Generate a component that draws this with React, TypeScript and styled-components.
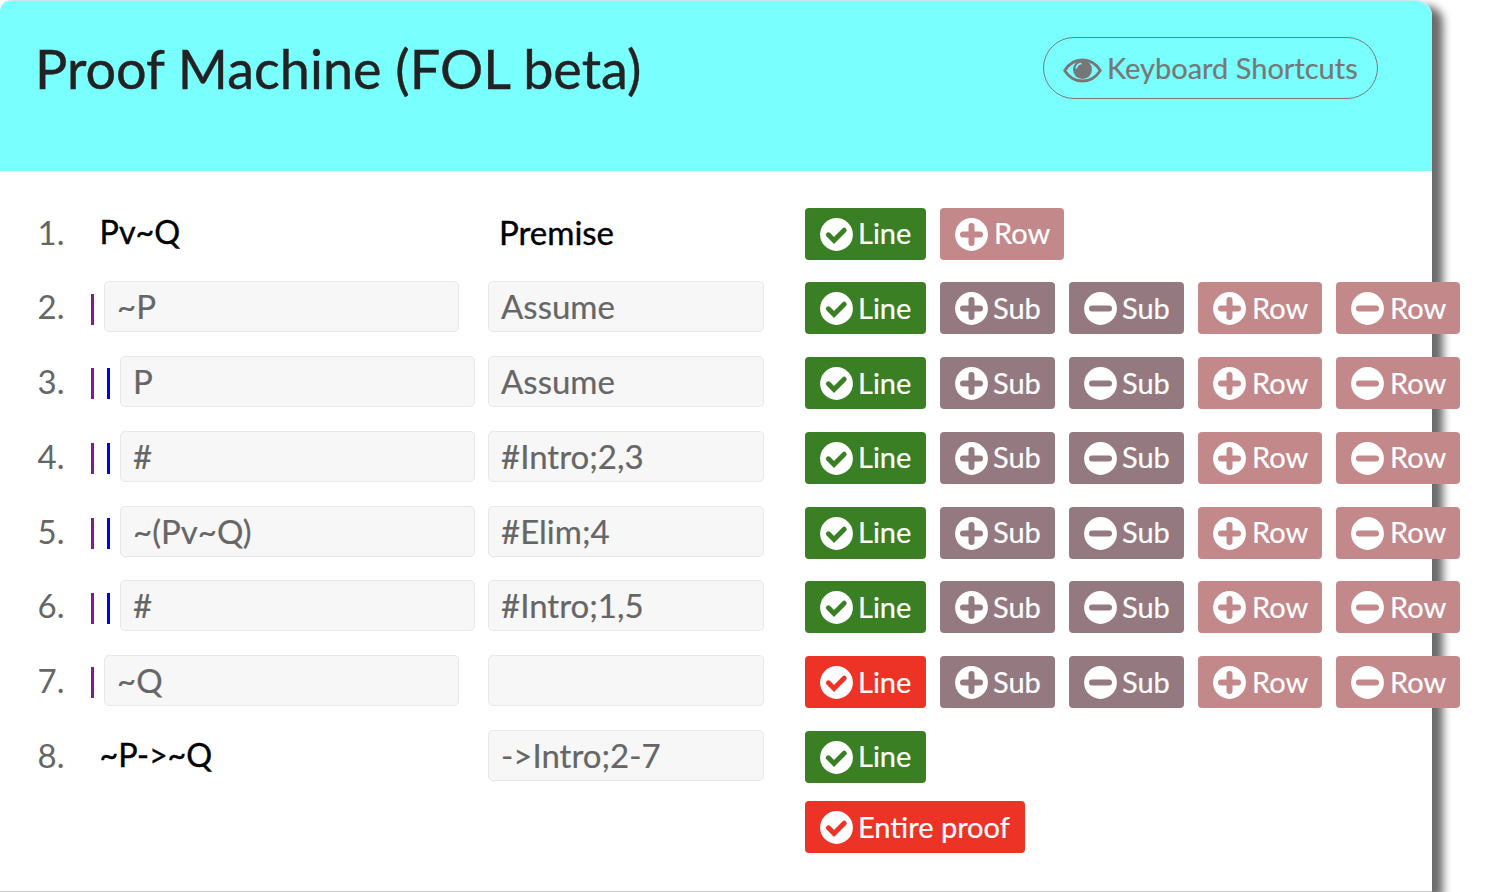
import React from "react";
import styled, { createGlobalStyle } from "styled-components";

const Global = createGlobalStyle`
  html, body { margin: 0; padding: 0; background: #fff; overflow: hidden; }
  body { font-family: Lato, "Open Sans", sans-serif; }
`;

const Panel = styled.main`
  width: 1432px;
  height: 892px;
  box-sizing: border-box;
  background: #fff;
  border-top: 1px solid #d4e4e4;
  border-bottom: 1px solid #c8c8c8;
  border-radius: 10px 16px 0 0;
  box-shadow: 11px 6px 8px #6b6b6b;
`;

const Header = styled.header`
  height: 170px;
  box-sizing: border-box;
  background: #7affff;
  border-radius: 10px 16px 0 0;
  padding: 35px 54px 0 35px;
  display: flex;
  justify-content: space-between;
  align-items: flex-start;
`;

const Title = styled.h1`
  margin: 0;
  font-size: 54px;
  line-height: 66px;
  font-weight: 400;
  color: #222;
  -webkit-text-stroke: 0.4px #222;
`;

const Shortcuts = styled.button`
  box-sizing: border-box;
  width: 335px;
  height: 62px;
  margin-top: 1px;
  padding: 0 0 0 19px;
  display: flex;
  align-items: center;
  gap: 5px;
  border: 1px solid #7a7a7a;
  border-radius: 31px;
  background: transparent;
  color: #777;
  font: 400 29px Lato, sans-serif;
  -webkit-text-stroke: 0.2px #777;
`;

const EyeIcon = styled.svg`
  flex: none;
  margin-top: 4px;
`;

const Body = styled.section`
  padding: 35.65px 0 0 37.5px;
  display: flex;
  flex-direction: column;
  gap: 21px;
`;

const Row = styled.div`
  display: flex;
  align-items: flex-start;
  height: 53.75px;
`;

const Num = styled.span`
  flex: 0 0 52.5px;
  font-size: 33px;
  line-height: 50px;
  color: #666;
`;

const Formula = styled.div`
  flex: 0 0 398px;
  display: flex;
  align-items: flex-start;
`;

const Bar = styled.i<{ $color: string }>`
  flex: none;
  width: 3px;
  height: 31px;
  margin: 12.2px 12px 0 1px;
  background: ${(p) => p.$color};
`;

const Field = styled.div<{ $wide?: boolean }>`
  flex: none;
  box-sizing: border-box;
  height: 51px;
  width: ${(p) => (p.$wide ? "276px" : "355px")};
  margin-left: ${(p) => (p.$wide ? "0" : "-2px")};
  padding: 0 12px;
  background: #f7f7f7;
  border: 1px solid #e8e8e8;
  border-radius: 5px;
  color: #666;
  font-size: 33px;
  line-height: 48.4px;
  -webkit-text-stroke: 0.2px #666;
`;

const Stated = styled.span`
  padding-left: 9.5px;
  font-size: 32.3px;
  line-height: 50px;
  color: #000;
  -webkit-text-stroke: 0.4px #000;
`;

const Rule = styled.span`
  flex: 0 0 276px;
  padding-left: 11px;
  box-sizing: border-box;
  font-size: 33px;
  line-height: 50px;
  color: #000;
  -webkit-text-stroke: 0.4px #000;
`;

const Actions = styled.div<{ $top?: number }>`
  margin: ${(p) => p.$top ?? 0.95}px 0 0 41px;
  display: flex;
  gap: 14px;
`;

const Btn = styled.button<{ $bg: string; $w: number }>`
  flex: none;
  box-sizing: border-box;
  width: ${(p) => p.$w}px;
  height: 52px;
  padding: 0 0 0 15px;
  display: flex;
  align-items: center;
  gap: 5px;
  border: 0;
  border-radius: 4px;
  background: ${(p) => p.$bg};
  color: #fff;
  font: 400 29px Lato, sans-serif;
  -webkit-text-stroke: 0.2px #fff;
  white-space: nowrap;
`;

const Label = styled.span`
  margin-top: -2px;
`;

const RowLabel = styled(Label)`
  margin-left: 1px;
`;

const GlyphBox = styled.svg`
  flex: none;
  width: 33px;
  height: 33px;
  margin-top: 1px;
`;

const C = { green: "#3a7f24", red: "#ed3325", sub: "#947a80", row: "#c3888a" };

type Kind = "check" | "plus" | "minus";

const Glyph = ({ kind, bg }: { kind: Kind; bg: string }) => (
  <GlyphBox viewBox="0 0 33 33" aria-hidden="true">
    <circle cx="16.5" cy="16.5" r="16.4" fill="#fff" />
    {kind === "check" && (
      <path d="M8.4 16.8L14 22.400L24.200 12.200" fill="none" stroke={bg} strokeWidth="5" strokeLinecap="round" strokeLinejoin="miter" />
    )}
    {kind !== "check" && (
      <path d="M8 16.500H25" fill="none" stroke={bg} strokeWidth="6" strokeLinecap="round" />
    )}
    {kind === "plus" && (
      <path d="M16.500 8V25" fill="none" stroke={bg} strokeWidth="6" strokeLinecap="round" />
    )}
  </GlyphBox>
);

const Line = ({ red }: { red?: boolean }) => {
  const bg = red ? C.red : C.green;
  return <Btn $bg={bg} $w={121}><Glyph kind="check" bg={bg} /><Label>Line</Label></Btn>;
};
const Sub = ({ kind }: { kind: Kind }) => (
  <Btn $bg={C.sub} $w={115}><Glyph kind={kind} bg={C.sub} /><Label>Sub</Label></Btn>
);
const RowBtn = ({ kind }: { kind: Kind }) => (
  <Btn $bg={C.row} $w={124}><Glyph kind={kind} bg={C.row} /><RowLabel>Row</RowLabel></Btn>
);

const Eye = () => (
  <EyeIcon width="39" height="25" viewBox="0 0 39 25" aria-hidden="true">
    <path d="M1.700 12.500C6 5.500 12 2 19.500 2S33 5.500 37.300 12.500C33 19.500 27 23 19.500 23S6 19.500 1.700 12.500Z" fill="none" stroke="#777" strokeWidth="2.800" />
    <circle cx="19.500" cy="11.500" r="9.500" fill="#777" />
    <path d="M13.200 10.500C13.500 7.800 15.500 5.800 18.500 5.300" fill="none" stroke="#7affff" strokeWidth="1.800" />
  </EyeIcon>
);

const colors = ["#7b1e8e", "#0000f0"];
const rows = [
  { n: 2, d: 1, f: "~P", r: "Assume" },
  { n: 3, d: 2, f: "P", r: "Assume" },
  { n: 4, d: 2, f: "#", r: "#Intro;2,3" },
  { n: 5, d: 2, f: "~(Pv~Q)", r: "#Elim;4" },
  { n: 6, d: 2, f: "#", r: "#Intro;1,5" },
  { n: 7, d: 1, f: "~Q", r: "", red: true },
];

export default function App() {
  return (
    <Panel>
      <Global />
      <Header>
        <Title>Proof Machine (FOL beta)</Title>
        <Shortcuts><Eye /><Label>Keyboard Shortcuts</Label></Shortcuts>
      </Header>
      <Body>
        <Row>
          <Num>1.</Num>
          <Formula><Stated>Pv~Q</Stated></Formula>
          <Rule>Premise</Rule>
          <Actions><Line /><RowBtn kind="plus" /></Actions>
        </Row>
        {rows.map((r) => (
          <Row key={r.n}>
            <Num>{r.n}.</Num>
            <Formula>
              {colors.slice(0, r.d).map((c) => <Bar key={c} $color={c} />)}
              <Field>{r.f}</Field>
            </Formula>
            <Field $wide>{r.r}</Field>
            <Actions>
              <Line red={r.red} />
              <Sub kind="plus" />
              <Sub kind="minus" />
              <RowBtn kind="plus" />
              <RowBtn kind="minus" />
            </Actions>
          </Row>
        ))}
        <Row>
          <Num>8.</Num>
          <Formula><Stated>~P-&gt;~Q</Stated></Formula>
          <Field $wide>-&gt;Intro;2-7</Field>
          <Actions><Line /></Actions>
        </Row>
        <Row>
          <Num />
          <Formula />
          <Rule />
          <Actions $top={-3.6}>
            <Btn $bg={C.red} $w={220}><Glyph kind="check" bg={C.red} /><Label>Entire proof</Label></Btn>
          </Actions>
        </Row>
      </Body>
    </Panel>
  );
}
